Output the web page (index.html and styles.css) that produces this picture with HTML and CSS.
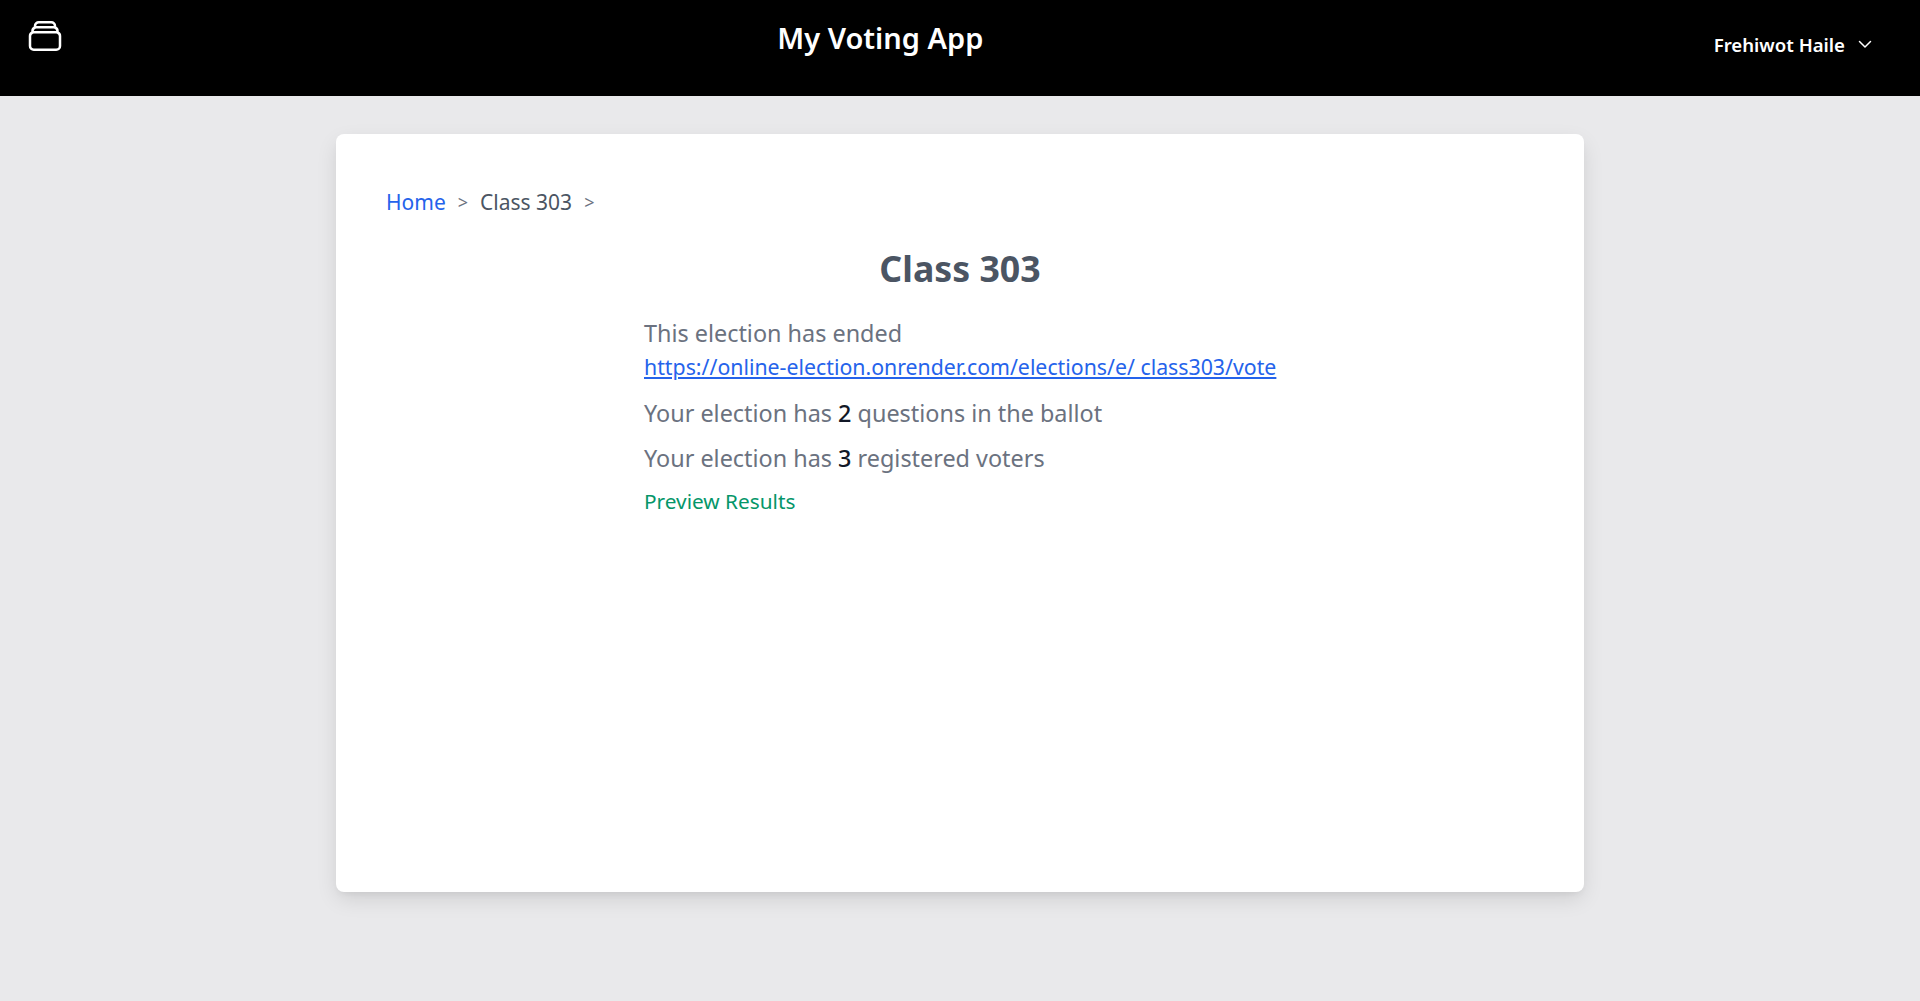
FILE: index.html
```html
<!DOCTYPE html>
<html lang="en">
<head>
  <meta charset="UTF-8">
  <title>My Voting App</title>
  <link rel="stylesheet" href="styles.css">
</head>
<body>
  <header class="topbar">
    <a class="logo" href="#">
      <svg class="logo-icon" viewBox="0 0 24 24" fill="none" stroke="currentColor" stroke-width="1.5" stroke-linecap="round" stroke-linejoin="round">
        <path d="M6 6.878V6a2.25 2.25 0 012.25-2.25h7.5A2.25 2.25 0 0118 6v.878m-12 0c.235-.083.487-.128.75-.128h10.5c.263 0 .515.045.75.128m-12 0A2.25 2.25 0 004.5 9v.878m13.5-3A2.25 2.25 0 0119.5 9v.878m0 0a2.246 2.246 0 00-.75-.128H5.25c-.263 0-.515.045-.75.128m15 0A2.25 2.25 0 0121 12v6a2.25 2.25 0 01-2.25 2.25H5.25A2.25 2.25 0 013 18v-6c0-.98.626-1.813 1.5-2.122"/>
      </svg>
    </a>
    <div class="app-title">My Voting App</div>
    <button class="user-menu">
      <span>Frehiwot Haile</span>
      <svg class="chevron" viewBox="0 0 16 16" fill="none" stroke="currentColor" stroke-width="1.5" stroke-linecap="round" stroke-linejoin="round">
        <path d="M2.5 5.5L8 11l5.5-5.5"/>
      </svg>
    </button>
  </header>

  <main class="card">
    <nav class="breadcrumb">
      <a href="#">Home</a>
      <span class="sep">&gt;</span>
      <span>Class 303</span>
      <span class="sep">&gt;</span>
    </nav>

    <h1 class="heading">Class 303</h1>

    <div class="details">
      <p class="status">This election has ended</p>
      <a class="vote-link" href="#">https://online-election.onrender.com/elections/e/ class303/vote</a>
      <p class="stat">Your election has <b>2</b> questions in the ballot</p>
      <p class="stat">Your election has <b>3</b> registered voters</p>
      <a class="preview" href="#">Preview Results</a>
    </div>
  </main>
</body>
</html>
```

FILE: styles.css
```css
* {
  box-sizing: border-box;
}
html, body {
  height: 100%;
}
body {
  margin: 0;
  background-color: #e9e9eb;
  font-family: "Noto Sans", "Open Sans", sans-serif;
  overflow: hidden;
}
a {
  text-decoration: none;
}
p {
  margin: 0;
}
.topbar {
  height: 96px;
  background-color: #000;
  color: #fff;
  display: flex;
  justify-content: space-between;
  align-items: flex-start;
  padding: 16px 47px 0 25px;
  margin-bottom: 38px;
}
.logo {
  color: #fff;
  display: block;
  height: 40px;
}
.logo-icon {
  width: 40px;
  height: 40px;
  display: block;
}
.app-title {
  font-size: 29px;
  font-weight: 600;
  line-height: 43px;
  margin-right: 18px;
}
.user-menu {
  display: flex;
  align-items: center;
  gap: 12px;
  height: 56px;
  padding: 0;
  border: none;
  background: none;
  color: #fff;
  font: 600 18.6px "Noto Sans", sans-serif;
}
.chevron {
  width: 16px;
  height: 16px;
}
.card {
  width: 1248px;
  height: 758px;
  margin: 0 auto;
  padding: 50px;
  background-color: #fff;
  border-radius: 8px;
  box-shadow: 0 8px 22px -2px rgba(0, 0, 0, 0.12), 0 4px 6px -2px rgba(0, 0, 0, 0.05);
}
.breadcrumb {
  display: flex;
  align-items: center;
  gap: 12px;
  height: 36px;
  font-size: 21px;
  color: #4b5563;
}
.breadcrumb a {
  color: #2563eb;
}
.sep {
  font-size: 18px;
  color: #6b7280;
}
.heading {
  margin: 23px 0 0;
  text-align: center;
  font-size: 35.7px;
  font-weight: 700;
  line-height: 50px;
  color: #4b5563;
}
.details {
  width: 632px;
  margin: 22px auto 0;
  font-size: 23.4px;
  color: #6b7280;
}
.status {
  line-height: 36px;
}
.vote-link {
  display: block;
  font-size: 21.3px;
  line-height: 31px;
  color: #2563eb;
  text-decoration: underline;
  white-space: nowrap;
}
.stat {
  line-height: 36px;
  margin-top: 9px;
}
.vote-link + .stat {
  margin-top: 13px;
}
.stat b {
  color: #111827;
  font-weight: 500;
}
.preview {
  display: block;
  margin-top: 10px;
  font-size: 20.8px;
  line-height: 30px;
  color: #059669;
}
```
